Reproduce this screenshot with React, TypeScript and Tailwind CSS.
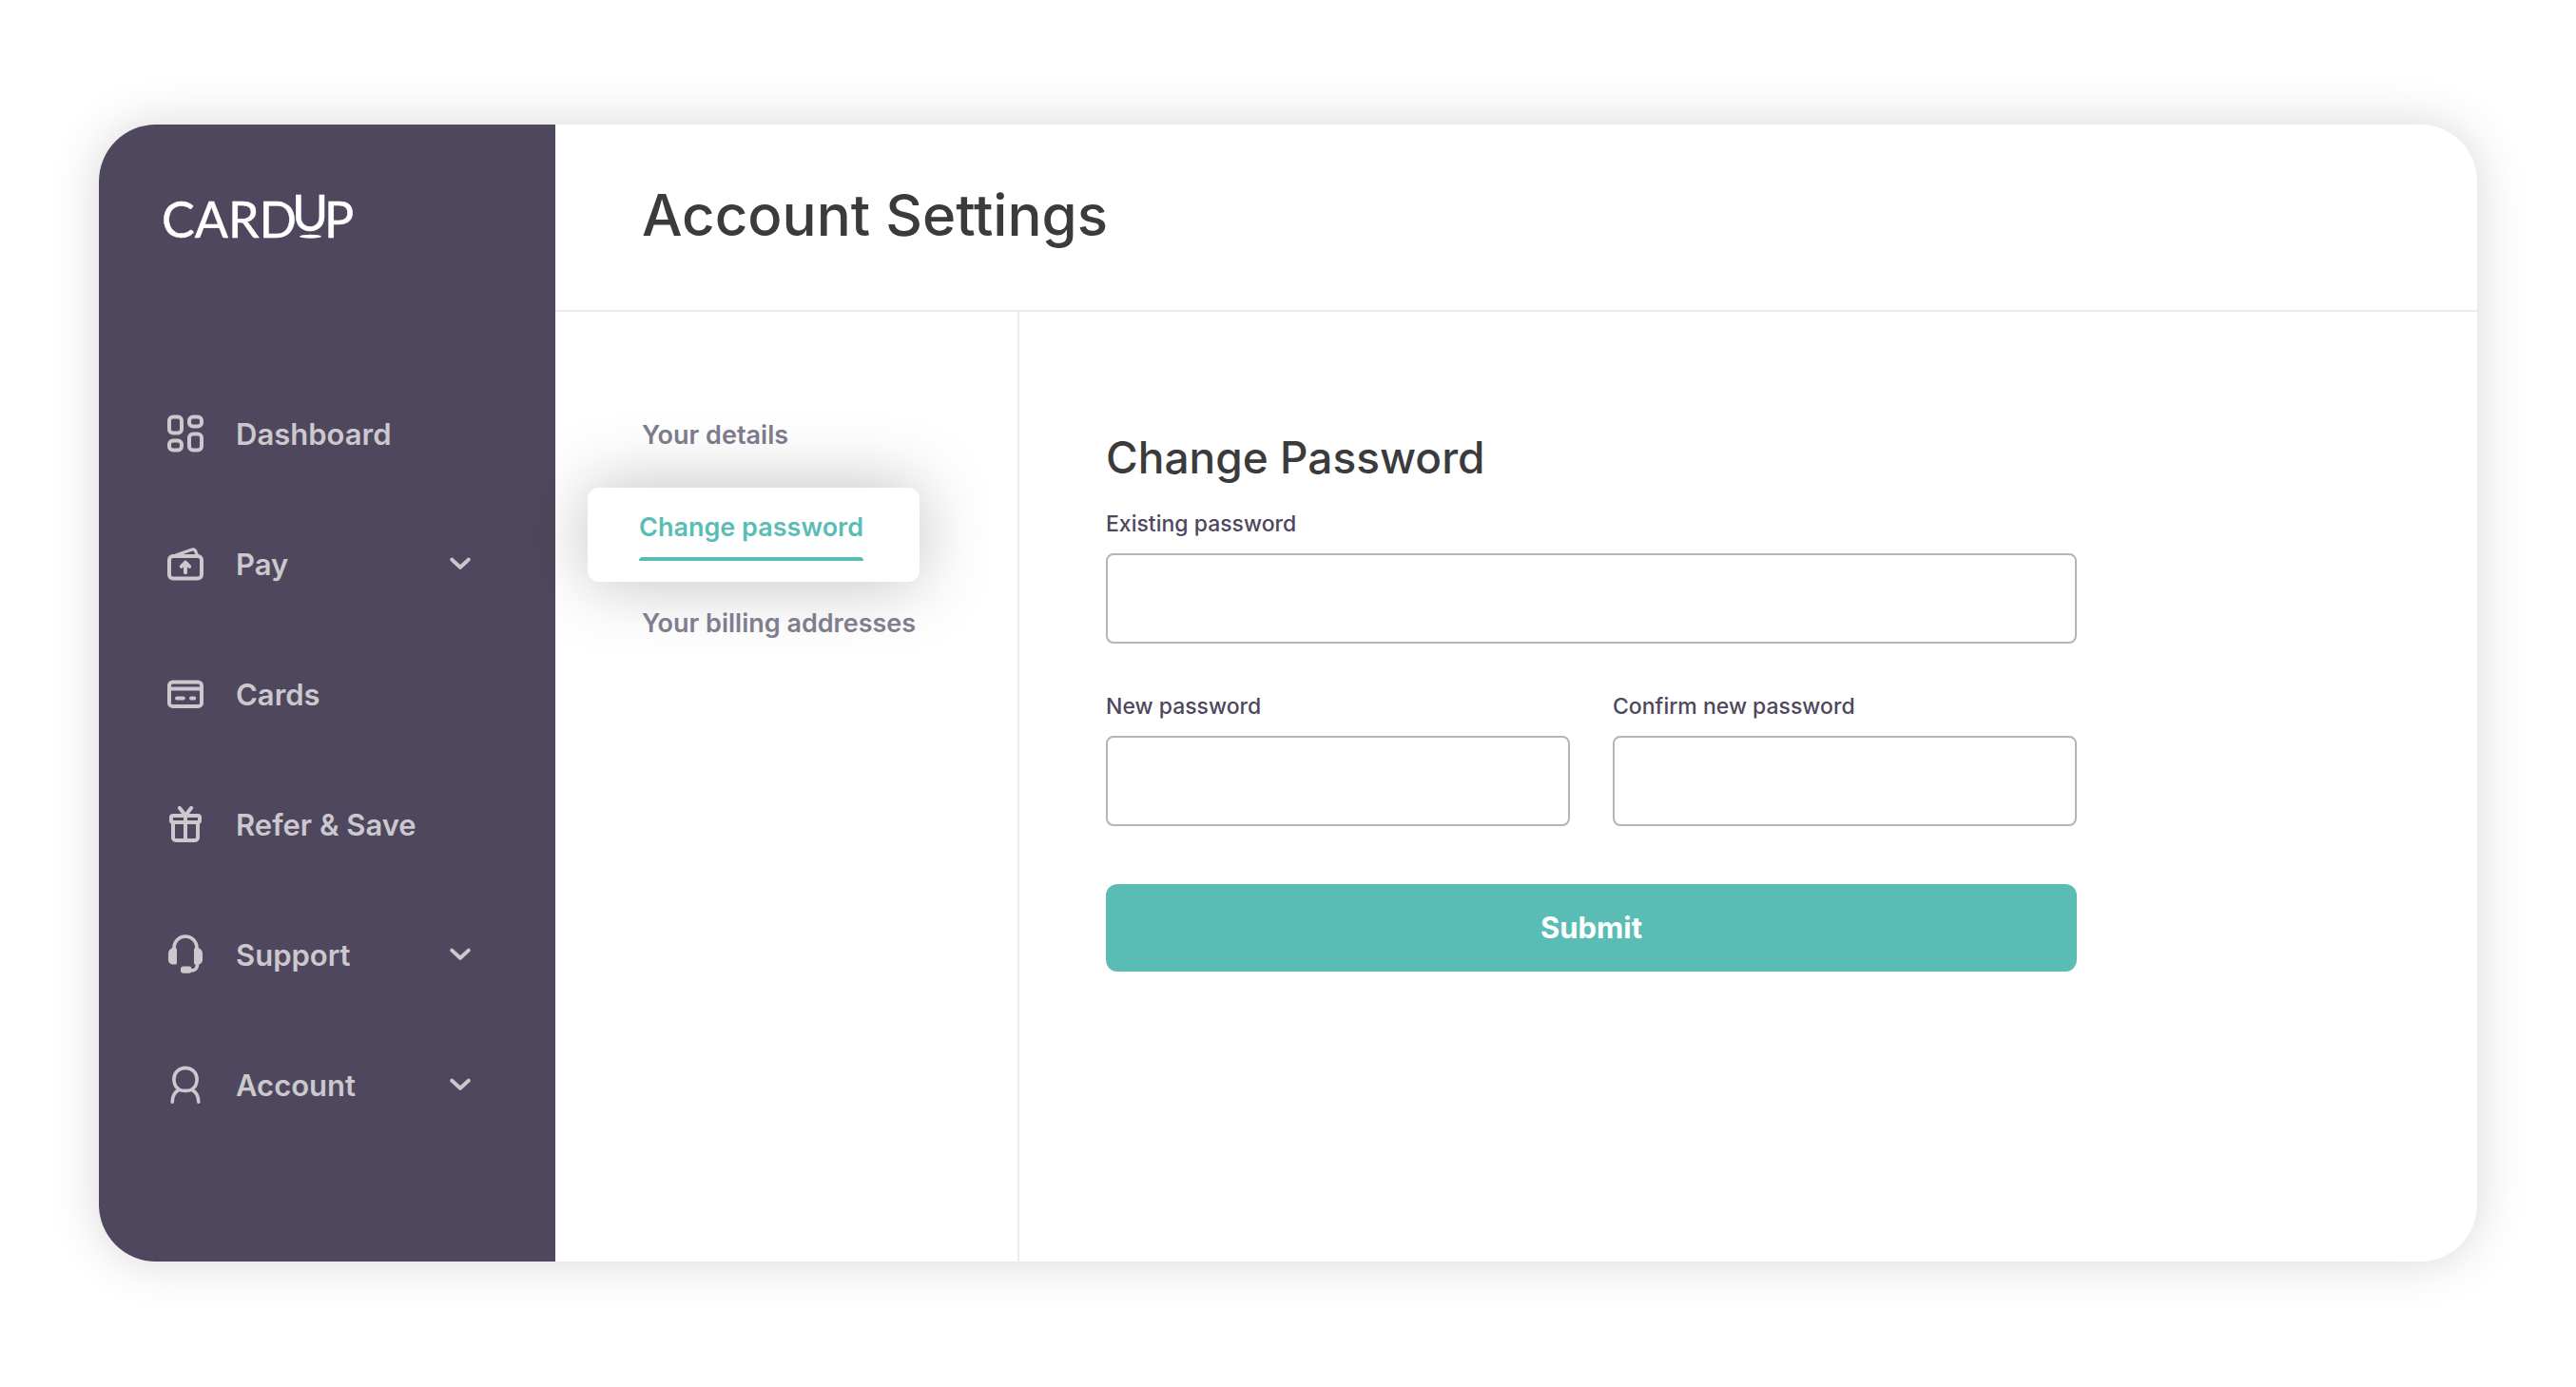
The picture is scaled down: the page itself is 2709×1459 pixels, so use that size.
import { useState } from "react";
import type { ReactNode } from "react";

interface NavItem {
  id: string;
  label: string;
  icon: ReactNode;
  expandable?: boolean;
}

const DashboardIcon = (
  <>
    <rect x="3" y="1.5" width="13" height="17" rx="4" />
    <rect x="24" y="1.5" width="13" height="10" rx="4" />
    <rect x="3" y="26.5" width="13" height="10" rx="4" />
    <rect x="24" y="19.5" width="13" height="17" rx="4" />
  </>
);

const PayIcon = (
  <>
    <rect x="3" y="11" width="34" height="23.5" rx="4" />
    <path d="M10 10L26.4 4.2C28.4 3.5 30 4.3 30.8 6.2L32.6 10.5" strokeWidth="3.2" />
    <path d="M20 28.2V18.5M15.8 21.8L20 17.6L24.2 21.8" />
  </>
);

const CardsIcon = (
  <>
    <rect x="3" y="6.5" width="34" height="25.5" rx="3.6" />
    <path d="M3 13.5H37M11 23.5H17.8M26 23.5H29.2" />
  </>
);

const GiftIcon = (
  <>
    <rect x="5" y="10" width="30" height="7" rx="2" />
    <path d="M7 17V33A3 3 0 0 0 10 36H30A3 3 0 0 0 33 33V17M20 10V36" />
    <path d="M13.8 1.8L19.4 9M26.2 1.8L20.6 9" />
  </>
);

const SupportIcon = (
  <>
    <path d="M8 14V12.5C8 5.2 13.4 0 20 0S32 5.2 32 12.5V14M32.6 28V29C32.6 33.4 30 36 26 36H23" strokeWidth="3.6" />
    <path
      d="M8 12H9.4A1.6 1.6 0 0 1 11 13.6V28A1.6 1.6 0 0 1 9.4 29.6H7.6C4.2 29.6 2 27.6 2 24.6V18.4C2 14.6 4.6 12 8 12ZM32 12H30.6A1.6 1.6 0 0 0 29 13.6V28A1.6 1.6 0 0 0 30.6 29.6H32.4C35.8 29.6 38 27.6 38 24.6V18.4C38 14.6 35.4 12 32 12Z"
      fill="currentColor"
      stroke="none"
    />
    <rect x="15" y="31.6" width="11.6" height="7.2" rx="3" fill="currentColor" stroke="none" />
  </>
);

const AccountIcon = (
  <>
    <path
      d="M13.6 24.2C10.2 22 7.9 18 7.9 13.4C7.9 6.4 13 1.4 20 1.4S32.1 6.4 32.1 13.4C32.1 18 29.8 22 26.4 24.2C24.6 25.2 22.4 25.4 20 25.4S15.4 25.2 13.6 24.2ZM13.6 24.2C8.8 26.6 6.2 31 6.2 37.2M26.4 24.2C31.2 26.6 33.8 31 33.8 37.2"
      strokeWidth="3.6"
    />
  </>
);

const navItems: NavItem[] = [
  { id: "dashboard", label: "Dashboard", icon: DashboardIcon },
  { id: "pay", label: "Pay", icon: PayIcon, expandable: true },
  { id: "cards", label: "Cards", icon: CardsIcon },
  { id: "refer", label: "Refer & Save", icon: GiftIcon },
  { id: "support", label: "Support", icon: SupportIcon, expandable: true },
  { id: "account", label: "Account", icon: AccountIcon, expandable: true },
];

const Logo = () => (
  <svg
    viewBox="0 0 200 48"
    className="block h-12 w-[200px] overflow-visible font-['Lato',sans-serif] text-[52px]"
    fill="#fff"
    role="img"
    aria-label="CardUp"
  >
    <g stroke="#fff" strokeWidth="0.5">
      <text x="-5" y="46">CARD</text>
      <text x="132" y="39">U</text>
      <text x="166" y="46">P</text>
    </g>
    <ellipse cx="151.5" cy="44.7" rx="11.5" ry="2" />
  </svg>
);

const Sidebar = () => (
  <aside className="w-[480px] shrink-0 bg-[#4f475d] pt-[73px] pr-[89px] pb-[120px] pl-[71px]">
    <a href="#home" className="block">
      <Logo />
    </a>
    <nav className="mt-[185px] flex flex-col gap-[97px]">
      {navItems.map((item) => (
        <button
          key={item.id}
          type="button"
          className="flex h-10 w-full cursor-pointer items-center gap-[33px] text-left text-[31px] leading-10 font-semibold text-[#cbc8ce]"
        >
          <svg
            viewBox="0 0 40 40"
            className="size-10 shrink-0 overflow-visible"
            fill="none"
            stroke="currentColor"
            strokeWidth="4"
            strokeLinecap="round"
            strokeLinejoin="round"
            aria-hidden="true"
          >
            {item.icon}
          </svg>
          <span className="flex-1">{item.label}</span>
          {item.expandable && (
            <svg
              viewBox="0 1 22 14"
              className="h-[14px] w-[22px] shrink-0 overflow-visible"
              fill="none"
              stroke="currentColor"
              strokeWidth="4"
              strokeLinecap="round"
              strokeLinejoin="round"
              aria-hidden="true"
            >
              <path d="M2.2 2.6L11 10.8L19.8 2.6" />
            </svg>
          )}
        </button>
      ))}
    </nav>
  </aside>
);

const SettingsNav = () => (
  <nav className="flex w-[488px] shrink-0 flex-col items-start border-r-2 border-[#ebebeb] pt-[110px] text-[27px] leading-10 font-semibold text-[#7f7d8e]">
    <a href="#details" className="ml-[91px]">
      Your details
    </a>
    <a
      href="#password"
      aria-current="page"
      className="mt-[35px] ml-[34px] w-[349px] rounded-xl bg-white px-[54px] py-[22px] text-[#5abdb5] shadow-[0_0_74px_rgba(0,0,0,0.26)]"
    >
      <span className="inline-flex flex-col gap-[11px] align-top">
        Change password
        <span className="h-1 rounded-t bg-[#5abdb5]" />
      </span>
    </a>
    <a href="#billing" className="mt-6 ml-[91px]">
      Your billing addresses
    </a>
  </nav>
);

interface FieldProps {
  id: string;
  label: string;
  value: string;
  onChange: (value: string) => void;
}

const PasswordField = ({ id, label, value, onChange }: FieldProps) => (
  <div className="flex min-w-0 flex-1 flex-col gap-[15px]">
    <label htmlFor={id} className="text-[23px] leading-8 font-medium text-[#4f475d]">
      {label}
    </label>
    <input
      id={id}
      type="password"
      value={value}
      onChange={(e) => onChange(e.target.value)}
      className="h-[95px] w-full rounded-lg border-2 border-[#b5b3bc] bg-white px-6 text-[27px] text-[#4f475d] outline-none focus:border-[#5abdb5]"
    />
  </div>
);

export default function App() {
  const [existing, setExisting] = useState("");
  const [next, setNext] = useState("");
  const [confirm, setConfirm] = useState("");

  return (
    <div className="flex min-h-screen bg-white px-[104px] pt-[131px] pb-[132px] font-['Inter',sans-serif]">
      <div className="flex min-w-0 flex-1 overflow-hidden rounded-[60px] bg-white shadow-[0_0_52px_rgba(0,0,0,0.16)]">
        <Sidebar />
        <div className="flex min-w-0 flex-1 flex-col">
          <header className="border-b-2 border-[#ebebeb] pt-[57px] pb-[62px] pl-[91px]">
            <h1 className="text-[60px] leading-[76px] font-medium text-[#3b3b3b]">
              Account Settings
            </h1>
          </header>
          <div className="flex flex-1">
            <SettingsNav />
            <main className="min-w-0 flex-1 px-[91px] pt-[125px]">
              <form
                className="w-full max-w-[1021px]"
                onSubmit={(e) => e.preventDefault()}
              >
                <h2 className="mb-[26px] text-[46px] leading-[56px] font-medium text-[#3b3b3b]">
                  Change Password
                </h2>
                <PasswordField
                  id="existing-password"
                  label="Existing password"
                  value={existing}
                  onChange={setExisting}
                />
                <div className="mt-[50px] flex gap-[45px]">
                  <PasswordField
                    id="new-password"
                    label="New password"
                    value={next}
                    onChange={setNext}
                  />
                  <PasswordField
                    id="confirm-password"
                    label="Confirm new password"
                    value={confirm}
                    onChange={setConfirm}
                  />
                </div>
                <button
                  type="submit"
                  className="mt-[61px] h-[92px] w-full cursor-pointer rounded-xl bg-[#5abdb5] text-[31px] font-bold text-white"
                >
                  Submit
                </button>
              </form>
            </main>
          </div>
        </div>
      </div>
    </div>
  );
}
